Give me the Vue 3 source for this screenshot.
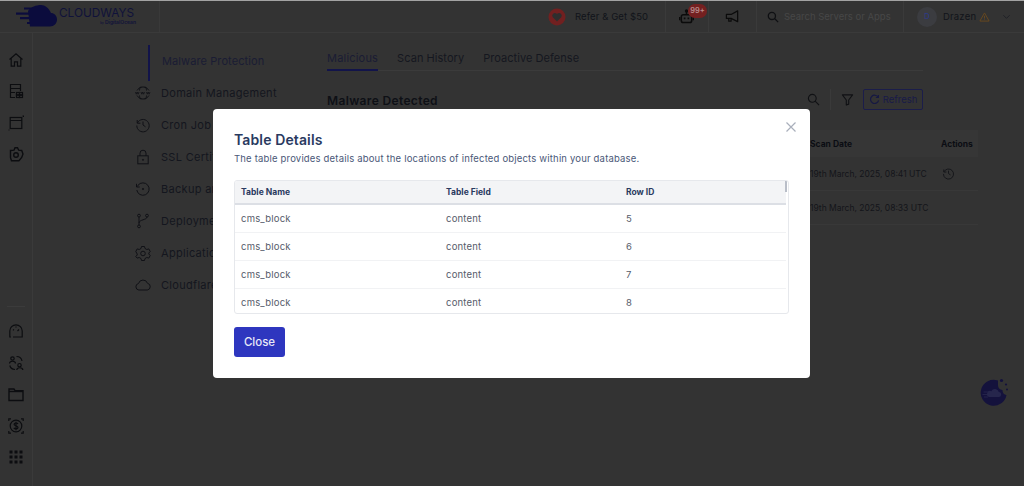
<script setup>
const sections = [
  { label: 'Domain Management', icon: 'www' },
  { label: 'Cron Job Management', icon: 'history' },
  { label: 'SSL Certificate', icon: 'lock' },
  { label: 'Backup and Restore', icon: 'backup' },
  { label: 'Deployment via Git', icon: 'git' },
  { label: 'Application Settings', icon: 'gear' },
  { label: 'Cloudflare', icon: 'cloud' }
]
const tabs = ['Malicious', 'Scan History', 'Proactive Defense']
const rows = [5, 6, 7, 8]
</script>

<template>
  <div class="page">
    <header class="topbar">
      <div class="logo-cell">
        <svg class="logo-mark" viewBox="0 0 41 22" fill="#0b0c3d">
          <rect x="8" y="2.500" width="10" height="2" />
          <rect x="0" y="7.500" width="15" height="2.200" />
          <rect x="4" y="12" width="11" height="2.200" />
          <rect x="11" y="17" width="7" height="2" />
          <path d="M14 21.500 12 6c3-4 8-6 13-6 4 0 8 3 10 8 3 0 6 2.500 6 6.500 0 4-3 7-7 7z" />
        </svg>
        <div class="logo-text">
          <span class="logo-name">CLOUDWAYS</span>
          <span class="logo-by"><i>by</i> DigitalOcean</span>
        </div>
      </div>
      <div class="top-spacer"></div>
      <div class="refer-cell">
        <svg class="heart" viewBox="0 0 18 18">
          <circle cx="9" cy="9" r="8.500" fill="#712020" />
          <path d="M9 13.500 4.800 9.200a2.600 2.600 0 0 1 3.700-3.600l.5.5.5-.5a2.600 2.600 0 0 1 3.700 3.600z" fill="#2e2e2e" />
        </svg>
        <span>Refer &amp; Get $50</span>
      </div>
      <div class="bot-cell">
        <svg class="top-icon" viewBox="0 0 16 16" fill="none" stroke="#0b0b0b" stroke-width="1.600">
          <rect x="2.500" y="6" width="11" height="8.500" rx="2" />
          <path d="M8 6V3" />
          <circle cx="8" cy="2" r="1" fill="#0b0b0b" />
          <path d="M6 9v2M10 9v2" stroke-width="1.800" />
          <path d="M.8 8.500v3.500M15.200 8.500v3.500" />
        </svg>
        <span class="badge">99+</span>
      </div>
      <div class="mega-cell">
        <svg class="top-icon" viewBox="0 0 16 16" fill="none" stroke="#0b0b0b" stroke-width="1.300" stroke-linejoin="round">
          <path d="M1.500 5.800h5L13.500 2v11.500L6.500 10h-5z" />
          <path d="M4 10v3h2.500v-3" />
        </svg>
      </div>
      <div class="search-cell">
        <svg class="search-icon" viewBox="0 0 14 14" fill="none" stroke="#0f1013" stroke-width="1.500">
          <circle cx="5.700" cy="5.700" r="4.200" />
          <path d="m8.800 8.800 4.200 4.200" />
        </svg>
        <span>Search Servers or Apps</span>
      </div>
      <div class="user-cell">
        <span class="avatar">D</span>
        <span class="user-name">Drazen</span>
        <svg class="warn" viewBox="0 0 12 11" fill="none" stroke="#6b4a1e" stroke-width="1">
          <path d="M6 1 .9 10h10.200z" />
          <path d="M6 4.200v3M6 8.200v.7" />
        </svg>
        <svg class="chev" viewBox="0 0 10 6" fill="none" stroke="#1f2026" stroke-width="1.100">
          <path d="m1.500 1 3.500 3.500L8.500 1" />
        </svg>
      </div>
    </header>

    <div class="body">
      <nav class="rail">
        <div class="rail-group">
          <span class="rail-item">
            <svg viewBox="0 0 16 16" class="rail-icon"><path d="M1.500 7.500 8 1.800l6.500 5.700M3.200 6.200v8h3.300v-4.300h3v4.300h3.300v-8" /></svg>
          </span>
          <span class="rail-item">
            <svg viewBox="0 0 16 16" class="rail-icon"><path d="M7 14.500H2.500v-13h10V8M2.500 5.500h10M2.500 9.500H7" /><rect x="8.500" y="9.500" width="3" height="2.500" /><rect x="11.500" y="9.500" width="3" height="2.500" /><rect x="8.500" y="12" width="3" height="2.500" /><rect x="11.500" y="12" width="3" height="2.500" /></svg>
          </span>
          <span class="rail-item">
            <svg viewBox="0 0 16 16" class="rail-icon"><rect x="2.200" y="2.500" width="11.600" height="11" /><path d="M2.200 5.500h11.600M14.500 1h1v1M.5 15h1" /></svg>
          </span>
          <span class="rail-item">
            <svg viewBox="0 0 16 16" class="rail-icon wide"><path d="M2.500 4.500 6 4.200l1-2.400h2.500l1.200 2.400 3 .3 1.300 3.500-1.300 3.500-2.800 3.200H3.500l-1-3z" /><circle cx="8" cy="9" r="2.300" /></svg>
          </span>
        </div>
        <div class="rail-group rail-bottom">
          <span class="rail-item">
            <svg viewBox="0 0 16 16" class="rail-icon"><path d="M3 14H1.800V8a6.200 6.200 0 0 1 12.400 0v6H5" /><path d="M8 3.500v1M5 6.500l1 .7M11 6.500l-1.500 1.500" /></svg>
          </span>
          <span class="rail-item">
            <svg viewBox="0 0 16 16" class="rail-icon"><circle cx="4.500" cy="3.500" r="1.700" /><path d="M1.500 8.500c0-3 6-3 6 0M8.500 1.500c3 0 5 1.800 5.500 4.500M1.800 10.500c.5 2.200 2.500 3.800 5.200 4" /><circle cx="11.500" cy="10.200" r="1.700" /><path d="M8.800 15c0-3 6-3 6 0" /></svg>
          </span>
          <span class="rail-item">
            <svg viewBox="0 0 16 16" class="rail-icon thick"><path d="M1 3h5l1.200 1.800H15v9.700H1z" /><path d="M1 5.500h14" /></svg>
          </span>
          <span class="rail-item">
            <svg viewBox="0 0 16 16" class="rail-icon"><circle cx="8" cy="8" r="5.800" /><path d="M10 6c-.5-1.200-3.800-1.500-3.900.2C6 8 10 7.600 10 9.600c0 1.800-3.500 1.600-4.200.3M8 3.800v8.400" /><path d="M.8 3V.8H3M13 .8h2.200V3M.8 13v2.200H3M13 15.200h2.200V13" /></svg>
          </span>
          <span class="rail-item">
            <svg viewBox="0 0 16 16" class="rail-icon dots"><rect x="1.500" y="1.500" width="3" height="3" /><rect x="6.500" y="1.500" width="3" height="3" /><rect x="11.500" y="1.500" width="3" height="3" /><rect x="1.500" y="6.500" width="3" height="3" /><rect x="6.500" y="6.500" width="3" height="3" /><rect x="11.500" y="6.500" width="3" height="3" /><rect x="1.500" y="11.500" width="3" height="3" /><rect x="6.500" y="11.500" width="3" height="3" /><rect x="11.500" y="11.500" width="3" height="3" /></svg>
          </span>
        </div>
      </nav>

      <aside class="sections">
        <div class="section active"><span class="active-label">Malware Protection</span></div>
        <div v-for="s in sections" :key="s.label" class="section">
          <svg class="sec-icon" viewBox="0 0 16 16">
            <g v-if="s.icon === 'www'">
              <path d="M2 5.500a6.800 6.800 0 0 1 12 0M2 10.500a6.800 6.800 0 0 0 12 0M6 1.500c-1 1-1.500 2.500-1.500 4M10 1.500c1 1 1.500 2.500 1.500 4M6 14.500c-1 -1-1.500-2.500-1.500-4M10 14.500c1-1 1.500-2.500 1.500-4" />
              <path d="m.5 7 .8 2.200L2.200 7l.9 2.200L4 7M6 7l.8 2.200L7.700 7l.9 2.200L9.500 7M11.500 7l.8 2.200.9-2.200.9 2.200.9-2.200" stroke-width=".8" />
            </g>
            <g v-else-if="s.icon === 'history'">
              <path d="M2.200 3v3.200h3.200M2.400 6A6.200 6.200 0 1 1 1.800 8.500" />
              <path d="M8 4.500V8l2.500 1.800" />
            </g>
            <g v-else-if="s.icon === 'lock'">
              <rect x="2.800" y="6.800" width="10.400" height="8" />
              <path d="M5 6.800V4.200a3 3 0 0 1 6 0v2.600" />
              <circle cx="8" cy="10.800" r=".6" />
            </g>
            <g v-else-if="s.icon === 'backup'">
              <path d="M1.800 9A6.200 6.200 0 1 0 3 4.300L1.500 6" />
              <path d="M1.500 2.800V6h3.200" />
              <circle cx="8" cy="8" r=".7" />
            </g>
            <g v-else-if="s.icon === 'git'">
              <circle cx="4" cy="2.600" r="1.400" />
              <circle cx="4" cy="13.400" r="1.400" />
              <circle cx="12" cy="2.600" r="1.400" />
              <path d="M4 4v8M12 4c0 3-8 2.500-8 6" />
            </g>
            <g v-else-if="s.icon === 'gear'">
              <path d="M6.500 1.500h3l.5 2 1.800 1 2-.6 1.400 2.600-1.400 1.500v1l1.400 1.500-1.400 2.600-2-.6-1.800 1-.5 2h-3l-.5-2-1.800-1-2 .6L.8 11.500 2.200 10V9L.8 6.500l1.400-2.600 2 .6 1.800-1z" />
              <circle cx="8" cy="8.500" r="2.300" />
            </g>
            <g v-else>
              <path d="M4 13.500a3.300 3.300 0 0 1-.3-6.500 4.700 4.700 0 0 1 9-.2 3.400 3.400 0 0 1-.2 6.700z" transform="translate(-.2 -.5)" />
            </g>
          </svg>
          <span>{{ s.label }}</span>
        </div>
      </aside>

      <main class="content">
        <div class="tabs">
          <span v-for="(t, i) in tabs" :key="t" class="tab" :class="{ current: i === 0 }">{{ t }}</span>
        </div>
        <div class="toolbar">
          <h2 class="detected">Malware Detected</h2>
          <svg class="tool-search" viewBox="0 0 14 14" fill="none" stroke="#101114" stroke-width="1.200">
            <circle cx="5.700" cy="5.700" r="4.200" />
            <path d="m8.800 8.800 4.200 4.200" />
          </svg>
          <span class="tool-sep"></span>
          <svg class="tool-filter" viewBox="0 0 14 14" fill="none" stroke="#101114" stroke-width="1.200" stroke-linejoin="round">
            <path d="M1.500 2h11L8.300 7.500V12L5.700 13V7.500z" />
          </svg>
          <button class="refresh">
            <svg viewBox="0 0 12 12" fill="none" stroke="#161843" stroke-width="1.300">
              <path d="M10 3.500A4.500 4.500 0 1 0 10.500 7" />
              <path d="M10.200 1v2.800H7.500" />
            </svg>
            Refresh
          </button>
        </div>
        <div class="scan-table">
          <div class="scan-row scan-head">
            <span></span><span>Scan Date</span><span>Actions</span>
          </div>
          <div class="scan-row">
            <span></span><span>19th March, 2025, 08:41 UTC</span>
            <svg class="scan-icon" viewBox="0 0 16 16" fill="none" stroke="#15161a" stroke-width="1.200">
              <path d="M2.200 3v3.200h3.200M2.400 6A6.200 6.200 0 1 1 1.800 8.500" />
              <path d="M8 4.500V8l2.500 1.800" />
            </svg>
          </div>
          <div class="scan-row">
            <span></span><span>19th March, 2025, 08:33 UTC</span><span></span>
          </div>
        </div>
      </main>
    </div>

    <button class="fab" aria-label="Assistant">
      <svg viewBox="0 0 28 28">
        <path d="M18 2.500 A13 13 0 1 0 26.500 17 A5 5 0 0 1 22.500 12 A5 5 0 0 1 18 7 z" fill="#14123c" />
        <circle cx="21.500" cy="2.500" r="1.600" fill="#14123c" />
        <circle cx="26" cy="6.500" r="1.100" fill="#14123c" />
        <circle cx="27" cy="11.500" r="1" fill="#14123c" />
        <path d="M9 19h9.500a2.500 2.500 0 0 0 .3-5 4 4 0 0 0-7.500-.8 3 3 0 0 0-2.300 5.800z" fill="#26264c" />
        <path d="M3.500 14h6M2.500 16.500h6M4 19h4" stroke="#26264c" stroke-width=".9" />
      </svg>
    </button>

    <div class="overlay">
      <section class="modal">
        <button class="x" aria-label="Close">
          <svg viewBox="0 0 12 12" fill="none" stroke="#a9afbb" stroke-width="1.200"><path d="m1.500 1.500 9 9M10.500 1.500l-9 9" /></svg>
        </button>
        <h1 class="title">Table Details</h1>
        <p class="sub">The table provides details about the locations of infected objects within your database.</p>
        <div class="data-box">
          <span class="thumb"></span>
          <div class="data-row data-head">
            <span>Table Name</span><span>Table Field</span><span>Row ID</span>
          </div>
          <div v-for="r in rows" :key="r" class="data-row">
            <span>cms_block</span><span>content</span><span>{{ r }}</span>
          </div>
        </div>
        <button class="close">Close</button>
      </section>
    </div>
  </div>
</template>

<style>
html, body { margin: 0; background: #333; }
</style>

<style scoped>
* { box-sizing: border-box; }
.page {
  position: relative;
  width: 1024px;
  height: 486px;
  overflow: hidden;
  display: flex;
  flex-direction: column;
  background: #333;
  border-top: 1px solid #a3a3a3;
  font-family: Inter, "Open Sans", sans-serif;
  color: #15171f;
}
.topbar {
  flex: 0 0 32px;
  display: flex;
  align-items: stretch;
  border-bottom: 1px solid #3a3a3a;
}
.logo-cell {
  width: 160px;
  border-right: 1px solid #393939;
  display: flex;
  align-items: center;
  padding: 0 0 1px 16px;
  gap: 2px;
}
.logo-mark { width: 41px; height: 22px; flex: none; }
.logo-text { display: flex; flex-direction: column; align-items: flex-end; margin-top: 2px; width: 77px; }
.logo-name { font-size: 11.800px; line-height: 11px; color: #10123a; white-space: nowrap; width: 77px; }
.logo-by { font-size: 5px; line-height: 6px; font-weight: 600; color: #10123a; }
.logo-by i { font-size: 3px; font-style: normal; }
.top-spacer { flex: 1; }
.refer-cell {
  width: 128px;
  display: flex;
  align-items: center;
  gap: 9px;
  padding-left: 10px;
  border-right: 1px solid #3a3a3a;
  font-size: 9.500px;
  letter-spacing: .1px;
  color: #11131a;
}
.heart { width: 18px; height: 18px; flex: none; }
.bot-cell {
  position: relative;
  width: 43px;
  border-right: 1px solid #3a3a3a;
  display: flex;
  align-items: center;
  padding-left: 13px;
}
.top-icon { width: 15px; height: 15px; }
.badge {
  position: absolute;
  left: 22px;
  top: 3px;
  width: 19px;
  height: 14px;
  border-radius: 7px;
  background: #742020;
  color: #b98c8c;
  font-size: 7.500px;
  font-weight: 600;
  line-height: 14px;
  text-align: center;
}
.mega-cell {
  width: 48px;
  border-right: 1px solid #3a3a3a;
  display: flex;
  align-items: center;
  justify-content: center;
}
.search-cell {
  width: 147px;
  border-right: 1px solid #3a3a3a;
  display: flex;
  align-items: center;
  gap: 5px;
  padding-left: 10px;
  font-size: 9.500px;
  color: #474747;
  white-space: nowrap;
}
.search-icon { width: 12px; height: 12px; flex: none; }
.user-cell {
  width: 120px;
  display: flex;
  align-items: center;
  padding-left: 13px;
  font-size: 9.500px;
  color: #11131a;
}
.avatar {
  width: 20px;
  height: 20px;
  border-radius: 50%;
  background: #3b3c40;
  color: #2b3a8e;
  font-size: 7.500px;
  display: flex;
  align-items: center;
  justify-content: center;
  flex: none;
}
.user-name { margin-left: 6px; letter-spacing: .2px; }
.warn { width: 11px; height: 10px; margin-left: 3px; }
.chev { width: 9px; height: 6px; margin-left: 12px; }

.body { flex: 1; display: flex; min-height: 0; }
.rail {
  width: 33px;
  border-right: 1px solid #3a3a3a;
  display: flex;
  flex-direction: column;
  justify-content: space-between;
  padding: 11px 0 13px;
}
.rail-group { display: flex; flex-direction: column; }
.rail-bottom { border-top: 1px solid #3b3b3b; margin: 0 7px; padding-top: 9px; align-items: center; }
.rail-item { height: 31.500px; display: flex; align-items: center; justify-content: center; }
.rail-icon { width: 16px; height: 16px; fill: none; stroke: #0c0d10; stroke-width: 1.200; }
.rail-icon.thick { stroke-width: 1.400; }
.rail-icon.wide { stroke-width: 1.400; }
.rail-icon.dots { fill: #0c0d10; stroke: none; }

.sections {
  width: 294px;
  padding: 12px 0 0 102px;
  font-size: 11px;
  letter-spacing: .3px;
  color: #14161e;
}
.section {
  height: 32px;
  display: flex;
  align-items: center;
  gap: 10px;
  white-space: nowrap;
}
.active {
  height: 36px;
  margin-bottom: -4px;
  padding-left: 13px;
  color: #1a1c33;
}
.active-label {
  display: flex;
  align-items: center;
  height: 36px;
  padding: 0 0 4px 12px;
  border-left: 2px solid #12144a;
  letter-spacing: .1px;
}
.sec-icon { width: 16px; height: 16px; flex: none; fill: none; stroke: #101116; stroke-width: 1; }

.content { flex: 1; padding-top: 15px; min-width: 0; }
.tabs {
  width: 596px;
  display: flex;
  gap: 19px;
  border-bottom: 1px solid #3b3b3b;
  font-size: 11px;
  letter-spacing: .05px;
  height: 23px;
}
.tab { height: 23px; line-height: 21px; }
.current { border-bottom: 2px solid #12144a; color: #1a1c33; letter-spacing: .2px; }
.toolbar {
  width: 596px;
  display: flex;
  align-items: center;
  height: 21px;
  margin-top: 18px;
}
.detected { margin: 2px auto 0 0; font-size: 12px; font-weight: 600; letter-spacing: .35px; color: #0e1016; }
.tool-search { width: 13px; height: 13px; }
.tool-sep { width: 1px; height: 21px; background: #3a3a3a; margin: 0 10px; }
.tool-filter { width: 13px; height: 13px; }
.refresh {
  width: 60px;
  height: 21px;
  margin-left: 9px;
  padding: 0;
  border: 1px solid #1b1d4a;
  border-radius: 2px;
  background: transparent;
  color: #181a48;
  font: 9.500px Inter, sans-serif;
  display: flex;
  align-items: center;
  justify-content: center;
  gap: 3px;
}
.refresh svg { width: 11px; height: 11px; }
.scan-table { width: 651px; margin-top: 20px; font-size: 8.500px; color: #13151a; }
.scan-row {
  display: grid;
  grid-template-columns: 483px 131px 37px;
  align-items: center;
  height: 34px;
  border-bottom: 1px solid #383838;
  white-space: nowrap;
}
.scan-head { height: 27px; background: #363636; font-weight: 700; border: 0; color: #0b0d13; }
.scan-icon { width: 13px; height: 13px; margin-left: 1px; }

.fab {
  position: absolute;
  left: 980px;
  top: 377px;
  width: 28px;
  height: 28px;
  padding: 0;
  border: 0;
  background: none;
}
.fab svg { width: 28px; height: 28px; display: block; }

.overlay {
  position: absolute;
  inset: 0;
  display: flex;
  justify-content: flex-start;
  padding: 108px 0 0 213px;
}
.modal {
  position: relative;
  width: 597px;
  height: 269px;
  background: #fff;
  border-radius: 4px;
  padding: 21px 21px 0;
}
.x {
  position: absolute;
  top: 12px;
  right: 13px;
  width: 12px;
  height: 12px;
  padding: 0;
  border: 0;
  background: none;
}
.x svg { display: block; width: 12px; height: 12px; }
.title { margin: 0; font-size: 14px; line-height: 20px; font-weight: 600; color: #2a3a5f; letter-spacing: .12px; }
.sub { margin: 1px 0 0; font-size: 9.500px; line-height: 16px; color: #4a5878; letter-spacing: .18px; white-space: nowrap; }
.data-box {
  position: relative;
  margin-top: 13px;
  width: 555px;
  height: 134px;
  border: 1px solid #e6e8ec;
  border-radius: 3px;
  overflow: hidden;
}
.thumb {
  position: absolute;
  right: 1px;
  top: 0;
  width: 2px;
  height: 11px;
  background: #b9bec8;
}
.data-row {
  display: grid;
  grid-template-columns: 205px 180px 1fr;
  align-items: center;
  height: 28px;
  padding-left: 6px;
  border-bottom: 1px solid #f1f2f4;
  font-size: 9.500px;
  letter-spacing: .2px;
  color: #565c6a;
  margin-right: 2px;
}
.data-head {
  height: 24px;
  background: #f3f4f6;
  border-bottom: 2px solid #dcdfe5;
  font-size: 8.500px;
  letter-spacing: 0;
  font-weight: 700;
  color: #2a3a5f;
}
.close {
  display: block;
  margin-top: 13px;
  width: 51px;
  height: 30px;
  padding: 0;
  border: 0;
  border-radius: 3px;
  background: #2e36bf;
  color: #e8e9f7;
  font: 500 11.500px Inter, sans-serif;
}
</style>
